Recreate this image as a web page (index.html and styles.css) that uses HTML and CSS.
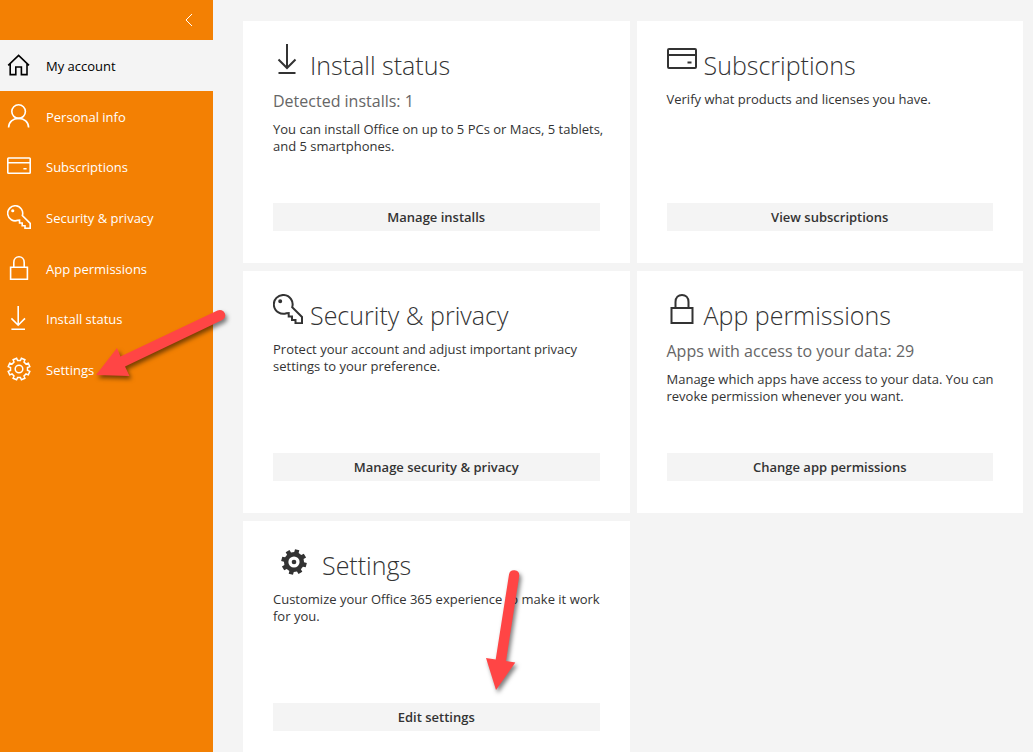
FILE: index.html
```html
<!DOCTYPE html>
<html lang="en">
<head>
<meta charset="utf-8">
<title>My account</title>
<link rel="stylesheet" href="styles.css">
</head>
<body>
<svg class="sprite" aria-hidden="true">
  <symbol id="home" viewBox="0 0 30 30"><path d="M1.5 15.5 14.5 3l13 12.500M4 13.500V27h7v-9.500h7V27h7V13.500"/></symbol>
  <symbol id="person" viewBox="0 0 30 30"><circle cx="14.500" cy="9.500" r="8.500"/><path d="M2 29.500c0-7 5.500-11.500 12.500-11.500S27 22.500 27 29.500"/></symbol>
  <symbol id="card" viewBox="0 0 30 30"><rect x="1" y="5" width="28" height="19" rx="1"/><path d="M1 11h28M20.500 18.500h4"/></symbol>
  <symbol id="key" viewBox="0 0 30 30"><path d="M13.500 19.200A9.400 9.400 0 1 1 19.200 13.200L29 23v6.200h-6.500V26H19v-3.500h-3.300V19z"/><circle cx="7.200" cy="7.200" r="1"/></symbol>
  <symbol id="lock" viewBox="0 0 30 30"><path d="M4.500 14h21v15h-21zM8.500 14V8c0-4.500 3-7 6.500-7s6.500 2.500 6.500 7v6"/></symbol>
  <symbol id="download" viewBox="0 0 30 30"><path d="M14 0v24M5.500 15.500l8.500 8.500 8.500-8.500M5.500 29h17"/></symbol>
  <symbol id="gear" viewBox="-12 -12 24 24"><g stroke-width="1.5"><path d="M8.500 1.400 10.800 2.400 9.300 5.900 7 5 5 7 5.900 9.300 2.400 10.800 1.400 8.500-1.400 8.500-2.400 10.800-5.900 9.300-5 7-7 5-9.300 5.900-10.800 2.400-8.500 1.400-8.500-1.400-10.800-2.400-9.300-5.900-7-5-5-7-5.900-9.300-2.400-10.800-1.400-8.500 1.400-8.500 2.400-10.800 5.900-9.300 5-7 7-5 9.300-5.900 10.800-2.400 8.500-1.400z"/><circle r="3.800"/></g></symbol>
</svg>

<div class="layout">
  <aside class="sidebar">
    <div class="sidebar-top">
      <button class="collapse" type="button" aria-label="Collapse menu"><svg viewBox="0 0 12 14"><path d="M9 1 3 7l6 6"/></svg></button>
    </div>
    <nav class="menu">
      <a class="menu-item active" href="#account"><svg class="menu-icon"><use href="#home"/></svg><span>My account</span></a>
      <a class="menu-item" href="#personal"><svg class="menu-icon"><use href="#person"/></svg><span>Personal info</span></a>
      <a class="menu-item" href="#subscriptions"><svg class="menu-icon"><use href="#card"/></svg><span>Subscriptions</span></a>
      <a class="menu-item" href="#security"><svg class="menu-icon"><use href="#key"/></svg><span>Security &amp; privacy</span></a>
      <a class="menu-item" href="#permissions"><svg class="menu-icon"><use href="#lock"/></svg><span>App permissions</span></a>
      <a class="menu-item" href="#installs"><svg class="menu-icon"><use href="#download"/></svg><span>Install status</span></a>
      <a class="menu-item" href="#settings"><svg class="menu-icon"><use href="#gear"/></svg><span>Settings</span>
        <svg class="arrow arrow-menu" viewBox="90 304 144 84"><path d="M96 375 117 348l3.500 8.500 97-46a5.300 5.300 0 0 1 4.800 9.600L125 366.500l4.500 9.500z"/></svg>
      </a>
    </nav>
  </aside>

  <main class="tiles">
    <section class="tile">
      <header class="tile-head"><svg class="tile-icon"><use href="#download"/></svg><h2>Install status</h2></header>
      <p class="tile-sub">Detected installs: 1</p>
      <p class="tile-text">You can install Office on up to 5 PCs or Macs, 5 tablets, and 5 smartphones.</p>
      <button class="action" type="button">Manage installs</button>
    </section>
    <section class="tile">
      <header class="tile-head"><svg class="tile-icon"><use href="#card"/></svg><h2>Subscriptions</h2></header>
      <p class="tile-text">Verify what products and licenses you have.</p>
      <button class="action" type="button">View subscriptions</button>
    </section>
    <section class="tile">
      <header class="tile-head"><svg class="tile-icon"><use href="#key"/></svg><h2>Security &amp; privacy</h2></header>
      <p class="tile-text">Protect your account and adjust important privacy settings to your preference.</p>
      <button class="action" type="button">Manage security &amp; privacy</button>
    </section>
    <section class="tile">
      <header class="tile-head"><svg class="tile-icon"><use href="#lock"/></svg><h2>App permissions</h2></header>
      <p class="tile-sub">Apps with access to your data: 29</p>
      <p class="tile-text">Manage which apps have access to your data. You can revoke permission whenever you want.</p>
      <button class="action" type="button">Change app permissions</button>
    </section>
    <section class="tile">
      <header class="tile-head wide"><svg class="tile-icon solid" viewBox="-12 -12 24 24"><g transform="rotate(-8)"><path d="M8.500 1.400 10.800 2.400 9.300 5.900 7 5 5 7 5.900 9.300 2.400 10.800 1.400 8.500-1.400 8.500-2.400 10.800-5.900 9.300-5 7-7 5-9.300 5.900-10.800 2.400-8.500 1.400-8.500-1.400-10.800-2.400-9.300-5.900-7-5-5-7-5.900-9.300-2.400-10.800-1.400-8.500 1.400-8.500 2.400-10.800 5.900-9.300 5-7 7-5 9.300-5.900 10.800-2.400 8.500-1.400z"/></g><circle class="hole" r="4.800"/><circle r="2"/></svg><h2>Settings</h2></header>
      <p class="tile-text">Customize your Office 365 experience to make it work for you.</p>
      <button class="action" type="button">Edit settings</button>
      <svg class="arrow arrow-tile" viewBox="480 564 48 136"><path d="M496 690 486 658l9.700 1.500L509 574.500a5.200 5.200 0 0 1 10.300 1L506 661l9.300 1.500z"/></svg>
    </section>
  </main>
</div>
</body>
</html>
```

FILE: styles.css
```css
* {
  box-sizing: border-box;
}

body {
  margin: 0;
  background: #f4f4f4;
  color: #333;
  font: 13px/17px "Segoe UI", "Open Sans", sans-serif;
}

.sprite {
  display: none;
}

.layout {
  display: flex;
  min-height: 100vh;
}

/* Sidebar */
.sidebar {
  flex: 0 0 213px;
  background: #f38003;
}

.sidebar-top {
  display: flex;
  justify-content: flex-end;
  align-items: center;
  height: 40px;
  padding-right: 14px;
}

.collapse {
  display: flex;
  padding: 4px;
  border: 0;
  background: none;
}

.collapse svg {
  width: 12px;
  height: 14px;
  fill: none;
  stroke: #fff;
}

.menu {
  display: grid;
  grid-auto-rows: 1fr;
  height: 355px;
}

.menu-item {
  position: relative;
  display: flex;
  align-items: center;
  gap: 15px;
  padding: 2px 0 0 7px;
  color: #fff;
  text-decoration: none;
}

.menu-item.active {
  background: #f4f4f4;
  color: #000;
}

.menu-icon {
  width: 24px;
  height: 24px;
  margin-bottom: 3px;
  fill: none;
  stroke: currentColor;
  stroke-width: 2;
}

/* Tiles */
.tiles {
  flex: 1;
  display: grid;
  grid-template-columns: 1fr 1fr;
  align-content: start;
  gap: 8px 7px;
  padding: 21px 10px 0 30px;
}

.tile {
  position: relative;
  display: flex;
  flex-direction: column;
  min-height: 242px;
  padding: 23px 30px 32px;
  background: #fff;
}

.tile-head {
  display: flex;
  gap: 7px;
}

.tile-head h2 {
  margin: 0;
  padding-top: 3px;
  font-size: 25px;
  line-height: 36px;
  font-weight: 300;
}

.tile-icon {
  width: 30px;
  height: 30px;
  fill: none;
  stroke: currentColor;
  stroke-width: 2;
}

.tile-head.wide {
  gap: 13px;
  padding-left: 6px;
}

.tile-icon.solid {
  height: 28px;
  margin-top: 4px;
  fill: currentColor;
  stroke: none;
}

.hole {
  fill: #fff;
}

.tile-sub {
  margin: 7px 0 0;
  color: #666;
  font-size: 16px;
  line-height: 22px;
}

.tile-text {
  margin: 8px -4px 0 0;
}

.tile-sub + .tile-text {
  margin-top: 9px;
}

.action {
  height: 28px;
  margin-top: auto;
  border: 0;
  background: #f4f4f4;
  color: #333;
  font: inherit;
  font-weight: 600;
}

/* Pointer arrows laid over the content */
.arrow {
  position: absolute;
  z-index: 1;
  fill: #ff4545;
  filter: drop-shadow(2px 3px 2px rgba(0, 0, 0, 0.5));
  pointer-events: none;
}

.arrow-menu {
  left: 90px;
  top: -40px;
  width: 144px;
  height: 84px;
}

.arrow-tile {
  left: 237px;
  top: 43px;
  width: 48px;
  height: 136px;
}
```
